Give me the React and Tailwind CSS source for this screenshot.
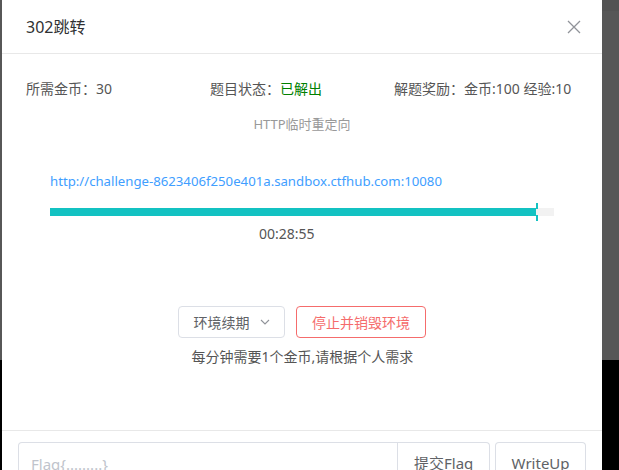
import React from 'react';

// 302跳转 challenge modal — static recreation.

const font = { fontFamily: '"Noto Sans", "Noto Sans CJK SC", sans-serif' };

export default function App() {
  const progress = 96.4;
  return (
    <div className="w-[619px] h-[470px] overflow-hidden flex bg-[#575757] text-[#555]" style={font}>
      <div className="w-[2px] flex flex-col">
        <div className="h-[360px] bg-[#575757]" />
        <div className="flex-1 bg-black" />
      </div>
      <div className="w-[600px] h-[470px] bg-white flex flex-col shrink-0">
        <div className="h-[54px] flex items-center justify-between pl-6 pr-5 border-b border-[#e8e8e8]">
          <span className="text-[16px] text-[#303133]">302跳转</span>
          <svg width="14" height="14" viewBox="0 0 14 14" className="mr-[1px]">
            <path d="M1 1 L13 13 M13 1 L1 13" stroke="#909399" strokeWidth="1.3" />
          </svg>
        </div>
        <div className="flex-1 flex flex-col">
          <div className="grid grid-cols-3 pl-6 pr-[24px] pt-[25px] text-[14px] leading-[20px] whitespace-nowrap">
            <span>所需金币：30</span>
            <span>题目状态：<span className="text-[#008000]">已解出</span></span>
            <span>解题奖励：金币:100 经验:10</span>
          </div>
          <div className="text-center text-[13px] text-[#999] mt-[15px] leading-[20px]">HTTP临时重定向</div>
          <div className="pl-12 pr-12 mt-[37px]">
            <div className="text-[13.2px] text-[#409eff] leading-[20px]">http://challenge-8623406f250e401a.sandbox.ctfhub.com:10080</div>
            <div className="relative mt-[17px] h-[8px] w-[504px] bg-[#f2f2f2]">
              <div className="h-full bg-[#13c2c2]" style={{ width: `${progress}%` }} />
              <div className="absolute top-[-5px] h-[18px] w-[2px] border-l-2 border-dashed border-[#13c2c2]" style={{ left: `${progress}%` }} />
            </div>
            <div className="text-[14px] mt-[8px] leading-[20px] pl-[209px]">00:28:55</div>
          </div>
          <div className="flex justify-center gap-[11px] mt-[62px]">
            <div className="h-[32px] w-[107px] border border-[#dcdfe6] rounded-[4px] flex items-center justify-center gap-[10px] text-[14px] text-[#606266]">
              环境续期
              <svg width="10" height="6" viewBox="0 0 10 6">
                <path d="M1 1 L5 5 L9 1" fill="none" stroke="#909399" strokeWidth="1.1" />
              </svg>
            </div>
            <div className="h-[32px] w-[130px] border border-[#f56c6c] rounded-[4px] flex items-center justify-center text-[14px] text-[#f56c6c]">
              停止并销毁环境
            </div>
          </div>
          <div className="text-center text-[14px] mt-[9px] leading-[20px] ml-[1px]">每分钟需要1个金币,请根据个人需求</div>
        </div>
        <div className="h-[40px] border-t border-[#e8e8e8] flex pl-4 pr-4 pt-[11px] gap-[5px]">
          <div className="flex w-[473px] border border-[#dcdfe6] border-b-0 rounded-t-[4px]">
            <div className="flex-1 pl-[12px] pt-[10px] text-[15px] text-[#c0c4cc]">Flag{'{'}.........{'}'}</div>
            <div className="w-[92px] border-l border-[#dcdfe6] pt-[9px] text-center text-[15px] text-[#606266]">提交Flag</div>
          </div>
          <div className="w-[91px] border border-[#dcdfe6] border-b-0 rounded-t-[4px] pt-[9px] text-center text-[15px] text-[#606266]">WriteUp</div>
        </div>
      </div>
      <div className="flex-1 flex flex-col">
        <div className="h-[11px] bg-[#535353]" />
        <div className="h-[349px] bg-[#575757]" />
        <div className="flex-1 bg-black" />
      </div>
    </div>
  );
}
